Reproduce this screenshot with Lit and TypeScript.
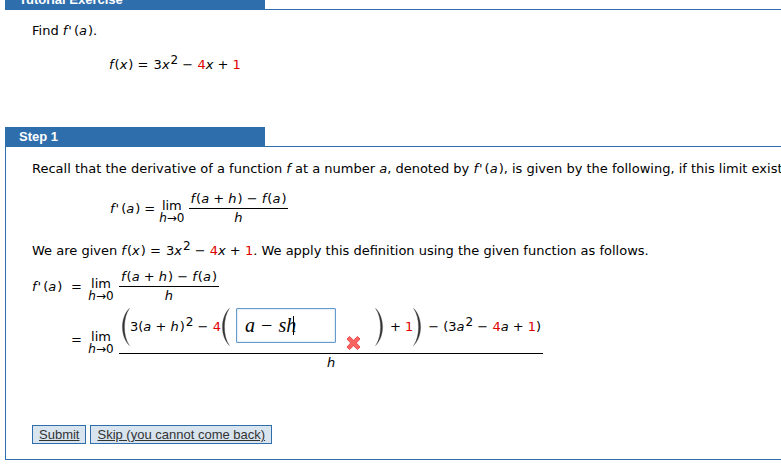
import { LitElement, html, css, svg } from "lit";
import { customElement } from "lit/decorators.js";

const leftParen = html`<svg class="paren" viewBox="0 0 9 38" aria-hidden="true">
  ${svg`<path d="M8.500 .3C-1 9.500-1 28.500 8.500 37.700C1.800 28 1.800 10 8.500 .3Z" fill="#333" stroke="#555" stroke-width=".3"/>`}
</svg>`;
const rightParen = html`<svg class="paren" viewBox="0 0 9 38" aria-hidden="true">
  ${svg`<path d="M.5 .3C10 9.500 10 28.500 .5 37.700C7.200 28 7.200 10 .5 .3Z" fill="#333" stroke="#555" stroke-width=".3"/>`}
</svg>`;

const limit = html`<span class="limit"><span class="lim">lim</span><span class="to"><i>h</i>→0</span></span>`;

const fn = html`<i class="math">f</i>`;

const quotient = html`<span class="frac">
  <span class="num"><span>${fn}(<i>a</i> + <i class="math">h</i>) − ${fn}(<i class="math">a</i>)</span></span>
  <span class="den"><i>h</i></span>
</span>`;

const fPrime = html`<span>${fn}<i class="prime">'</i>(<i class="math">a</i>)</span>`;

const fOfX = html`${fn}(<i class="math">x</i>) <span class="eq">=</span> 3<i>x</i><sup>2</sup> − <b class="given">4</b><i>x</i> + <b class="given">1</b>`;

@customElement("app-root")
export class AppRoot extends LitElement {
  static styles = css`
    :host {
      display: block;
      overflow: hidden;
      background: #fff;
      color: #000;
      font: 13px/18px Verdana, "DejaVu Sans", sans-serif;
      white-space: nowrap;
    }
    section {
      margin-left: 5px;
    }
    header {
      display: flex;
      align-items: flex-end;
      border-bottom: 1px solid #2e6eac;
    }
    h2 {
      box-sizing: border-box;
      width: 260px;
      margin: 0;
      padding-left: 14px;
      background: #2e6eac;
      color: #fff;
      font: bold 13px/19px "Liberation Sans", Arial, sans-serif;
    }
    .exercise header {
      height: 9px;
      overflow: hidden;
    }
    .exercise .body {
      padding: 12px 0 53px 27px;
    }
    p {
      margin: 0;
    }
    .display {
      margin: 16px 0 0 77px;
    }
    sup {
      margin-left: 1px;
      font-size: 12px;
      line-height: 0;
      vertical-align: 5px;
    }
    .math,
    .eq {
      margin-right: 1px;
    }
    .prime {
      margin-right: 2px;
    }
    .given {
      color: #e00000;
      font-weight: normal;
    }
    .step .body {
      padding: 13px 0 15px 26px;
      border-left: 1px solid #2e6eac;
      border-bottom: 1px solid #2e6eac;
    }
    .definition {
      display: flex;
      align-items: center;
      gap: 4px;
      margin: 12px 0 15px 78px;
    }
    .work {
      display: grid;
      grid-template-columns: 35px 12px 28px max-content;
      column-gap: 4px;
      row-gap: 3px;
      align-items: center;
      margin-top: 8px;
    }
    .limit {
      display: flex;
      flex-direction: column;
      align-items: center;
      margin-top: 4px;
    }
    .lim {
      line-height: 14px;
    }
    .to {
      font-size: 12px;
      line-height: 10px;
    }
    .frac {
      display: inline-flex;
      flex-direction: column;
      justify-self: start;
    }
    .num {
      display: flex;
      justify-content: center;
      padding: 0 2px;
      border-bottom: 1px solid #000;
    }
    .den {
      text-align: center;
    }
    .big {
      align-items: center;
      padding-bottom: 7px;
    }
    .paren {
      width: 9px;
      height: 38px;
    }
    .term {
      margin-left: 6px;
    }
    .field {
      position: relative;
      display: flex;
      align-self: flex-start;
      margin: 0 10px 0 6px;
    }
    input {
      box-sizing: border-box;
      width: 100px;
      height: 35px;
      padding: 0 8px;
      border: 1px solid #6699cc;
      border-radius: 1px;
      outline: none;
      box-shadow: inset 0 0 2px #a9c8e8;
      background: #fff;
      color: #000;
      font: italic 20px "Liberation Serif", "Times New Roman", serif;
    }
    .caret {
      position: absolute;
      left: 57px;
      top: 8px;
      width: 1px;
      height: 19px;
      background: #000;
    }
    .wrong {
      align-self: flex-end;
      width: 16px;
      height: 16px;
      margin: 0 13px -5px 0;
    }
    .actions {
      display: flex;
      gap: 4px;
      margin-top: 53px;
    }
    button {
      height: 19px;
      padding: 0 6px;
      border: 1px solid #2e6eac;
      background: #d8e4ee;
      color: #333;
      font: 13px/17px "Liberation Sans", Arial, sans-serif;
      text-decoration: underline;
    }
  `;

  render() {
    return html`
      <section class="exercise">
        <header><h2>Tutorial Exercise</h2></header>
        <div class="body">
          <p>Find ${fPrime}.</p>
          <p class="display">${fOfX}</p>
        </div>
      </section>
      <section class="step">
        <header><h2>Step 1</h2></header>
        <div class="body">
          <p>
            Recall that the derivative of a function <i>f</i> at a number <i>a</i>, denoted by ${fPrime}, is given by the
            following, if this limit exists.
          </p>
          <div class="definition">${fPrime}<span>=</span>${limit}${quotient}</div>
          <p>We are given ${fOfX}. We apply this definition using the given function as follows.</p>
          <div class="work">
            ${fPrime}<span>=</span>${limit}${quotient}
            <span></span><span>=</span>${limit}
            <span class="frac">
              <span class="num big">
                ${leftParen}
                <span>3(<i>a</i> + <i class="math">h</i>)<sup>2</sup> − <b class="given">4</b></span>
                ${leftParen}
                <span class="field">
                  <input type="text" aria-label="Missing expression" value="a − sh" /><span class="caret"></span>
                </span>
                <svg class="wrong" viewBox="0 0 16 16" role="img" aria-label="Incorrect">
                  <path
                    d="M3.500 1.500L7.500 5.300L11.500 1.500L14 4L10.300 8L14 12L11.500 14.500L7.500 10.700L3.500 14.500L1 12L4.700 8L1 4Z"
                    fill="#f8645f" stroke="#ee4a4f" stroke-linejoin="round"
                  />
                </svg>
                ${rightParen}
                <span class="term">+ <b class="given">1</b></span>
                ${rightParen}
                <span class="term">− (3<i>a</i><sup>2</sup> − <b class="given">4</b><i>a</i> + <b class="given">1</b>)</span>
              </span>
              <span class="den"><i>h</i></span>
            </span>
          </div>
          <div class="actions">
            <button type="button">Submit</button>
            <button type="button">Skip (you cannot come back)</button>
          </div>
        </div>
      </section>
    `;
  }
}
